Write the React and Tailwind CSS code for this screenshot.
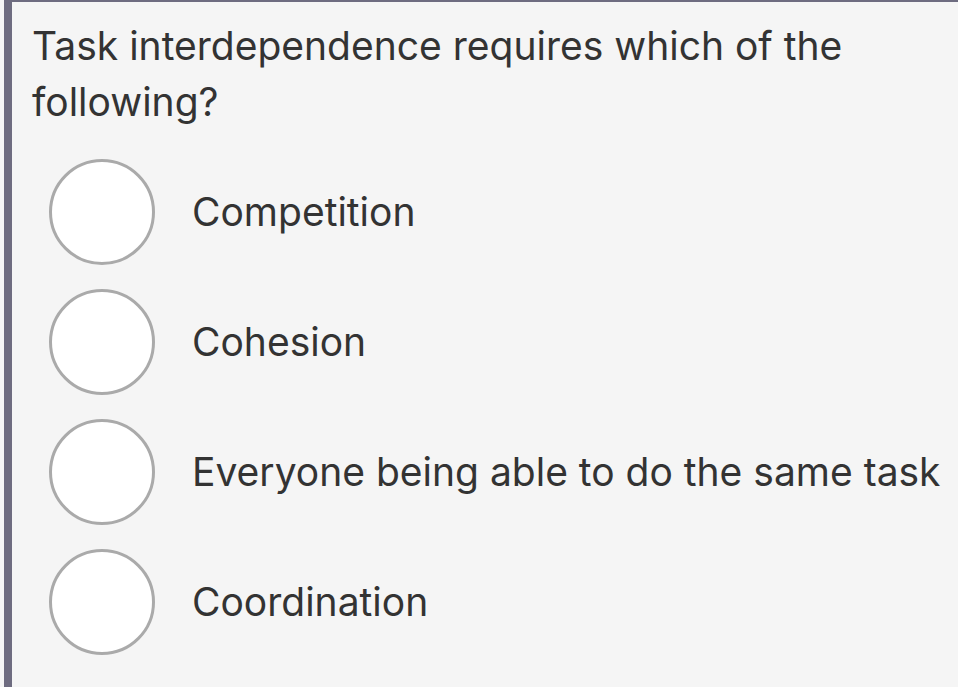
export default function App() {
  const options = ["Competition", "Cohesion", "Everyone being able to do the same task", "Coordination"];
  return (
    <div className="w-[958px] h-[687px] bg-[#f5f5f5] pl-[4px] overflow-hidden" style={{ fontFamily: "Inter, 'Noto Sans', sans-serif" }}>
      <div className="h-full border-l-[8px] border-t-[2px] border-[#6e6c80] bg-[#f5f5f5] pl-[20px] pt-[16px]">
        <div className="text-[39px] leading-[56px] text-[#333333] pr-[20px]">
          Task interdependence requires which of the following?
        </div>
        <div className="flex flex-col gap-[24px] mt-[29px] pl-[17px]">
          {options.map((o) => (
            <div key={o} className="flex items-center gap-[37px] whitespace-nowrap">
              <div className="w-[106px] h-[106px] rounded-full border-[3px] border-[#aaaaaa] bg-white shrink-0" />
              <div className="text-[39px] leading-[56px] text-[#333333]">{o}</div>
            </div>
          ))}
        </div>
      </div>
    </div>
  );
}
